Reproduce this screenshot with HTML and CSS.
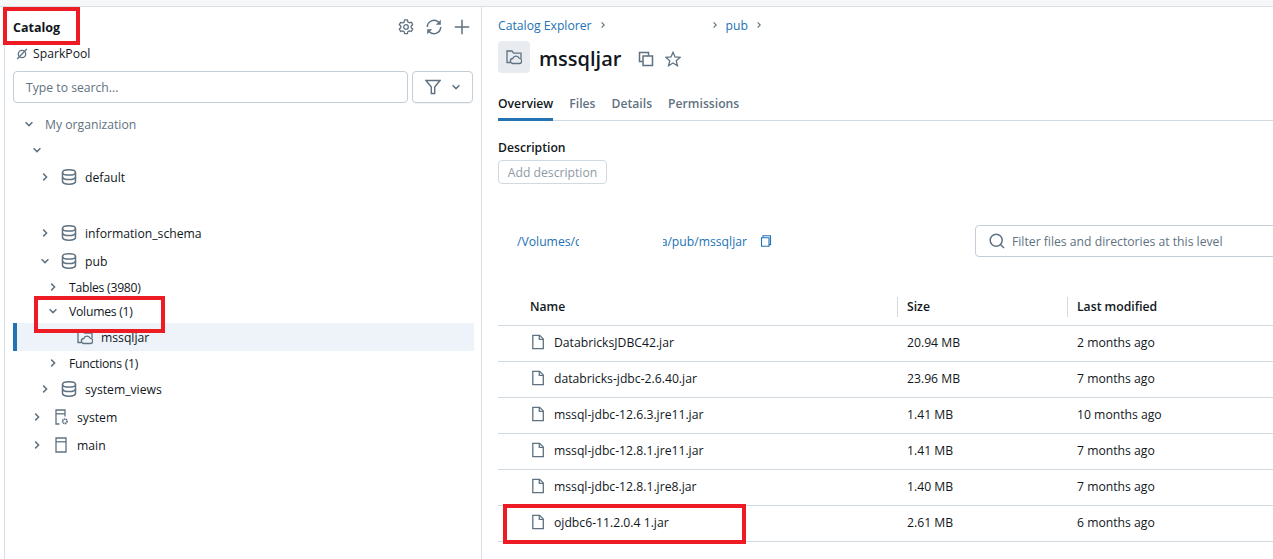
FILE: index.html
```html
<!DOCTYPE html>
<html lang="en">
<head>
  <meta charset="UTF-8" />
  <title>mssqljar - Catalog Explorer</title>
  <link rel="stylesheet" href="styles.css">
</head>
<body>

<svg class="sprites" width="0" height="0" aria-hidden="true">
  <symbol id="chev-right" viewBox="0 0 16 16"><path d="M6.200 4.600 9.600 8l-3.400 3.400" fill="none" stroke="currentColor" stroke-width="1.500"/></symbol>
  <symbol id="chev-down" viewBox="0 0 16 16"><path d="M4.600 6.200 8 9.600l3.400-3.400" fill="none" stroke="currentColor" stroke-width="1.500"/></symbol>
  <symbol id="db" viewBox="0 0 16 16"><g fill="none" stroke="currentColor" stroke-width="1.500"><ellipse cx="8" cy="3.400" rx="6.500" ry="2.600"/><path d="M1.500 3.400v9.200c0 1.400 2.900 2.600 6.500 2.600s6.500-1.200 6.500-2.600V3.400"/><path d="M1.500 8c0 1.400 2.900 2.600 6.500 2.600s6.500-1.200 6.500-2.600"/></g></symbol>
  <symbol id="file" viewBox="0 0 16 16"><path d="M2.800 1.300h6.900l3.600 3.600v9.800H2.800z M9.300 1.300v4h4" fill="none" stroke="currentColor" stroke-width="1.300"/></symbol>
  <symbol id="volume" viewBox="0 0 16 16"><g fill="none" stroke="currentColor" stroke-width="1.300"><path d="M4.500 13.500H1V2h5l1.700 2.200H15V9"/><path d="M7 14.500a2.500 2.500 0 0 1-.2-5 3.400 3.400 0 0 1 6.400-.3 2.700 2.700 0 0 1 .5 5.300z"/></g></symbol>
</svg>

<div class="topstrip"></div>

<div class="app">
  <aside class="sidebar">
    <div class="side-head">
      <h2>Catalog</h2>
      <div class="side-tools">
        <svg width="16" height="16" viewBox="0 0 16 16"><g fill="none" stroke="currentColor" stroke-width="1.300" stroke-linejoin="round"><circle cx="8" cy="8" r="2.300"/><path d="M6.600.9h2.800l.4 2 1.500.9 2-.7 1.400 2.400-1.500 1.400v1.800l1.500 1.400-1.400 2.400-2-.7-1.500.9-.4 2H6.600l-.4-2-1.500-.9-2 .7-1.400-2.400 1.500-1.400V7.100L1.300 5.700 2.700 3.300l2 .7 1.500-.9z"/></g></svg>
        <svg width="16" height="16" viewBox="0 0 16 16"><g fill="none" stroke="currentColor" stroke-width="1.500"><path d="M1.300 8a6.700 6.700 0 0 1 11.400-4.700"/><path d="M14.700 8a6.700 6.700 0 0 1-11.400 4.700"/></g><path d="M14.800.8v5h-5zM1.200 15.200v-5h5z" fill="currentColor"/></svg>
        <svg width="16" height="16" viewBox="0 0 16 16"><path d="M8 .8v14.400M.8 8h14.400" fill="none" stroke="currentColor" stroke-width="1.500"/></svg>
      </div>
    </div>
    <div class="pool">
      <svg width="12" height="12" viewBox="0 0 12 12"><g fill="none" stroke="currentColor" stroke-width="1.300"><circle cx="6" cy="6" r="3.700"/><path d="M1.200 11 10.800 1"/></g></svg>
      <span>SparkPool</span>
    </div>
    <div class="search-row">
      <div class="search-box">Type to search...</div>
      <div class="filter-btn">
        <svg width="16" height="16" viewBox="0 0 16 16"><path d="M1 1.500h14L9.700 8v6.500H6.300V8z" fill="none" stroke="currentColor" stroke-width="1.400"/></svg>
        <svg class="small-chev" width="16" height="16"><use href="#chev-down"/></svg>
      </div>
    </div>

    <ul class="tree">
      <li class="row h26 lv0 muted"><svg class="chev" width="16" height="16"><use href="#chev-down"/></svg><span>My organization</span></li>
      <li class="row h26 lv1"><svg class="chev" width="16" height="16"><use href="#chev-down"/></svg></li>
      <li class="row h28 lv2"><svg class="chev" width="16" height="16"><use href="#chev-right"/></svg><svg class="ico" width="16" height="16"><use href="#db"/></svg><span>default</span></li>
      <li class="row h28 lv2"></li>
      <li class="row h28 lv2"><svg class="chev" width="16" height="16"><use href="#chev-right"/></svg><svg class="ico" width="16" height="16"><use href="#db"/></svg><span>information_schema</span></li>
      <li class="row h28 lv2"><svg class="chev" width="16" height="16"><use href="#chev-down"/></svg><svg class="ico" width="16" height="16"><use href="#db"/></svg><span>pub</span></li>
      <li class="row h24 lv3"><svg class="chev" width="16" height="16"><use href="#chev-right"/></svg><span class="tight">Tables (3980)</span></li>
      <li class="row h24 lv3"><svg class="chev" width="16" height="16"><use href="#chev-down"/></svg><span class="tight">Volumes (1)</span></li>
      <li class="row h28 selected"><svg class="ico" width="16" height="16"><use href="#volume"/></svg><span>mssqljar</span></li>
      <li class="row h24 lv3"><svg class="chev" width="16" height="16"><use href="#chev-right"/></svg><span class="tight">Functions (1)</span></li>
      <li class="row h28 lv2"><svg class="chev" width="16" height="16"><use href="#chev-right"/></svg><svg class="ico" width="16" height="16"><use href="#db"/></svg><span>system_views</span></li>
      <li class="row h28 lv1">
        <svg class="chev" width="16" height="16"><use href="#chev-right"/></svg>
        <svg class="ico" width="16" height="16" viewBox="0 0 16 16"><g fill="none" stroke="currentColor" stroke-width="1.300"><path d="M6.500 15H3V1h9v6.500"/><path d="M3 4.800h9"/></g><circle cx="11.800" cy="12.300" r="2.200" fill="none" stroke="currentColor" stroke-width="1.800" stroke-dasharray="1.200 .5"/></svg>
        <span>system</span>
      </li>
      <li class="row h28 lv1">
        <svg class="chev" width="16" height="16"><use href="#chev-right"/></svg>
        <svg class="ico" width="16" height="16" viewBox="0 0 16 16"><g fill="none" stroke="currentColor" stroke-width="1.300"><path d="M3 1h10v14H3z"/><path d="M3 4.800h10"/></g></svg>
        <span>main</span>
      </li>
    </ul>
  </aside>

  <main class="content">
    <nav class="crumbs">
      <a>Catalog Explorer</a>
      <svg class="crumb-sep" width="12" height="12" viewBox="0 0 16 16"><use href="#chev-right"/></svg>
      <span class="crumb-gap"></span>
      <svg class="crumb-sep" width="12" height="12" viewBox="0 0 16 16"><use href="#chev-right"/></svg>
      <a>pub</a>
      <svg class="crumb-sep" width="12" height="12" viewBox="0 0 16 16"><use href="#chev-right"/></svg>
    </nav>

    <div class="title-row">
      <div class="title-icon"><svg width="16" height="16"><use href="#volume"/></svg></div>
      <h1>mssqljar</h1>
      <svg class="title-act" width="16" height="16" viewBox="0 0 16 16"><g fill="none" stroke="currentColor" stroke-width="1.500"><path d="M10.500 4.800V1.500H1.500v9h3.300"/><path d="M5 5h9.500v9.500H5z"/></g></svg>
      <svg class="title-act" width="16" height="16" viewBox="0 0 16 16"><path d="M8 1.300 10 6l5.100.4-3.900 3.300 1.200 5L8 12l-4.400 2.700 1.200-5L.9 6.400 6 6z" fill="none" stroke="currentColor" stroke-width="1.300"/></svg>
    </div>

    <div class="tabs">
      <a class="tab active">Overview</a>
      <a class="tab">Files</a>
      <a class="tab">Details</a>
      <a class="tab">Permissions</a>
    </div>

    <div class="desc-label">Description</div>
    <div class="desc-btn">Add description</div>

    <div class="path-row">
      <div class="path">
        <span class="path-start">/Volumes/c</span><span class="path-end"><span>a/pub/mssqljar</span></span>
        <svg width="12" height="12" viewBox="0 0 12 12"><g fill="none" stroke="currentColor" stroke-width="1.100"><path d="M3 2.800V.800h7.500v8.800h-1.500"/><path d="M1.500 2.800h7.500v8.500H1.500z"/></g></svg>
      </div>
      <div class="file-filter">
        <svg width="16" height="16" viewBox="0 0 16 16"><g fill="none" stroke="currentColor" stroke-width="1.500"><circle cx="7.200" cy="7.200" r="6"/><path d="m11.500 11.500 3.500 3.500"/></g></svg>
        <span>Filter files and directories at this level</span>
      </div>
    </div>

    <table class="files">
      <thead>
        <tr><th class="c-name"><span>Name</span></th><th class="c-size"><span>Size</span></th><th class="c-mod"><span>Last modified</span></th></tr>
      </thead>
      <tbody>
        <tr><td class="c-name"><svg width="16" height="16"><use href="#file"/></svg>DatabricksJDBC42.jar</td><td>20.94 MB</td><td>2 months ago</td></tr>
        <tr><td class="c-name"><svg width="16" height="16"><use href="#file"/></svg>databricks-jdbc-2.6.40.jar</td><td>23.96 MB</td><td>7 months ago</td></tr>
        <tr><td class="c-name"><svg width="16" height="16"><use href="#file"/></svg>mssql-jdbc-12.6.3.jre11.jar</td><td>1.41 MB</td><td>10 months ago</td></tr>
        <tr><td class="c-name"><svg width="16" height="16"><use href="#file"/></svg>mssql-jdbc-12.8.1.jre11.jar</td><td>1.41 MB</td><td>7 months ago</td></tr>
        <tr><td class="c-name"><svg width="16" height="16"><use href="#file"/></svg>mssql-jdbc-12.8.1.jre8.jar</td><td>1.40 MB</td><td>7 months ago</td></tr>
        <tr><td class="c-name"><svg width="16" height="16"><use href="#file"/></svg>ojdbc6-11.2.0.4 1.jar</td><td>2.61 MB</td><td>6 months ago</td></tr>
      </tbody>
    </table>
  </main>
</div>

<!-- red annotation boxes drawn over the screenshot -->
<div class="mark mark-catalog"></div>
<div class="mark mark-volumes"></div>
<div class="mark mark-file"></div>

</body>
</html>
```

FILE: styles.css
```css
* {
  box-sizing: border-box;
}

html, body {
  height: 559px;
  overflow: hidden;
}

body {
  margin: 0;
  background: #fff;
  color: #11171c;
  font-family: "Open Sans", "Noto Sans", Arial, sans-serif;
  font-size: 12.2px;
  position: relative;
}

.sprites {
  position: absolute;
}

svg {
  flex: none;
  display: block;
}

.topstrip {
  height: 7px;
  background: #f6f7f9;
  border-bottom: 1px solid #d8dfe6;
}

.app {
  display: flex;
  height: 552px;
  padding-left: 4px;
}

/* left panel */
.sidebar {
  width: 478px;
  flex: none;
  border-left: 1px solid #d8dfe6;
  border-right: 1px solid #d8dfe6;
  padding: 0 7px 0 8px;
}

.side-head {
  height: 40px;
  display: flex;
  align-items: center;
  justify-content: space-between;
  padding-right: 4px;
}

.side-head h2 {
  margin: 0;
  font-size: 12.500px;
  font-weight: 700;
}

.side-tools {
  display: flex;
  gap: 12px;
  color: #5f7281;
}

.pool {
  height: 13px;
  display: flex;
  align-items: center;
  gap: 5px;
  padding-left: 3px;
}

.pool svg {
  color: #5f7281;
}

.search-row {
  display: flex;
  gap: 4px;
  margin-top: 11px;
  height: 32px;
}

.search-box {
  width: 395px;
  border: 1px solid #c4ced8;
  border-radius: 4px;
  padding-left: 12px;
  display: flex;
  align-items: center;
  color: #5f7281;
}

.filter-btn {
  width: 61px;
  border: 1px solid #c4ced8;
  border-radius: 4px;
  box-shadow: 0 1px 1px rgba(0,0,0,0.05);
  display: flex;
  align-items: center;
  justify-content: center;
  gap: 7px;
  color: #5f7281;
}

.small-chev {
  margin-right: -3px;
}

.tree {
  list-style: none;
  margin: 8px 0 0;
  padding: 0;
}

.row {
  display: flex;
  align-items: center;
  gap: 8px;
}

.h24 { height: 24px; }
.h26 { height: 26px; }
.h28 { height: 28px; }

.lv0 { padding-left: 8px; }
.lv1 { padding-left: 16px; }
.lv2 { padding-left: 24px; }
.lv3 { padding-left: 32px; }

.muted {
  color: #5f7281;
}

.tight {
  letter-spacing: -0.25px;
}

.chev, .ico {
  color: #5f7281;
}

.selected {
  background: #eef3f9;
  border-left: 4px solid #2272b4;
  padding-left: 60px;
}

/* right panel */
.content {
  flex: 1;
  padding-left: 16px;
  min-width: 0;
}

.crumbs {
  height: 36px;
  display: flex;
  align-items: center;
  gap: 5px;
  color: #2272b4;
}

.crumb-sep {
  color: #5f7281;
}

.crumb-gap {
  width: 90px;
}

.title-row {
  display: flex;
  align-items: center;
  height: 32px;
  margin-top: -2px;
}

.title-icon {
  width: 32px;
  height: 32px;
  border-radius: 4px;
  background: #e8ecf0;
  color: #5f7281;
  display: flex;
  align-items: center;
  justify-content: center;
  margin-right: 9px;
}

.title-row h1 {
  margin: 0 17px 0 0;
  padding-top: 3px;
  font-size: 20px;
  font-weight: 600;
}

.title-act {
  color: #5f7281;
  margin-top: 4px;
  margin-right: 11px;
}

.tabs {
  display: flex;
  gap: 16px;
  height: 48px;
  align-items: flex-end;
  border-bottom: 1px solid #d1d9e1;
}

.tab {
  height: 26px;
  color: #5f7281;
  font-weight: 600;
  margin-bottom: -1px;
}

.tab.active {
  color: #11171c;
  border-bottom: 3px solid #2272b4;
}

.desc-label {
  margin-top: 17px;
  font-weight: 600;
  line-height: 20px;
}

.desc-btn {
  width: 109px;
  height: 24px;
  margin-top: 2px;
  padding-top: 1px;
  border: 1px solid #d1d9e1;
  border-radius: 4px;
  color: #8e9ba6;
  display: flex;
  align-items: center;
  justify-content: center;
}

.path-row {
  display: flex;
  align-items: center;
  justify-content: space-between;
  margin-top: 41px;
  height: 32px;
}

.path {
  display: flex;
  align-items: center;
  padding-left: 19px;
  color: #2272b4;
}

/* the middle of the path is blanked out in the screenshot */
.path-start {
  width: 62px;
  overflow: hidden;
  white-space: nowrap;
}

.path-end {
  width: 84px;
  margin-left: 84px;
  margin-right: 13px;
  display: flex;
  justify-content: flex-end;
  overflow: hidden;
  white-space: nowrap;
}

.file-filter {
  width: 310px;
  height: 32px;
  margin-right: -12px;
  border: 1px solid #c4ced8;
  border-radius: 4px;
  display: flex;
  align-items: center;
  gap: 7px;
  padding-left: 13px;
  color: #5f7281;
}

.files {
  border-collapse: collapse;
  table-layout: fixed;
  width: 775px;
  margin-top: 32px;
}

.files th {
  height: 36px;
  padding: 1px 0 0;
  text-align: left;
  font-weight: 600;
  border-bottom: 1px solid #d1d9e1;
}

.files th span {
  display: block;
  line-height: 20px;
  border-left: 1px solid #d1d9e1;
  padding-left: 9px;
}

.files th.c-name span {
  border-left: 0;
  padding-left: 0;
}

.files td {
  height: 36px;
  padding: 0 0 2px 10px;
  border-bottom: 1px solid #d1d9e1;
}

.files th.c-name {
  width: 399px;
  padding-left: 32px;
}

.files th.c-size {
  width: 170px;
}

.files td.c-name {
  padding-left: 32px;
}

.files td.c-name svg {
  display: inline-block;
  vertical-align: -3px;
  margin-right: 8px;
  color: #5f7281;
}

/* annotations */
.mark {
  position: absolute;
  border: 4px solid #ed1c24;
}

.mark-catalog {
  left: 3px;
  top: 7px;
  width: 77px;
  height: 38px;
}

.mark-volumes {
  left: 34px;
  top: 296px;
  width: 131px;
  height: 37px;
}

.mark-file {
  left: 503px;
  top: 504px;
  width: 243px;
  height: 40px;
}
```
